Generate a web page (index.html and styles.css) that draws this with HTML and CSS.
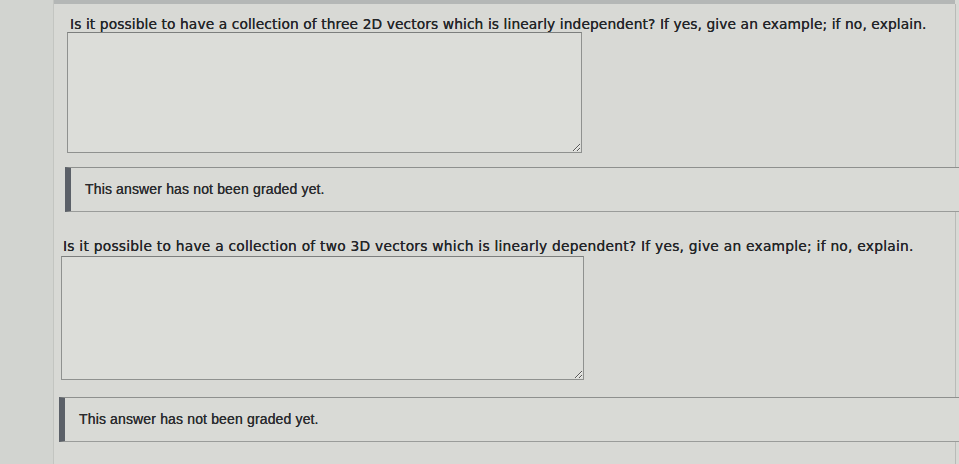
FILE: index.html
```html
<!DOCTYPE html>
<html>
<head>
<meta charset="utf-8">
<link rel="stylesheet" href="styles.css">
</head>
<body>
<div class="page">
  <div class="sidebar"></div>
  <div class="main">
    <div class="topband"></div>
    <div class="content">
      <section class="q q1">
        <p class="prompt">Is it possible to have a collection of three 2D vectors which is linearly independent? If yes, give an example; if no, explain.</p>
        <textarea class="answer a1"></textarea>
        <div class="graded g1">This answer has not been graded yet.</div>
      </section>
      <section class="q q2">
        <p class="prompt">Is it possible to have a collection of two 3D vectors which is linearly dependent? If yes, give an example; if no, explain.</p>
        <textarea class="answer a2"></textarea>
        <div class="graded g2">This answer has not been graded yet.</div>
      </section>
    </div>
  </div>
</div>
</body>
</html>
```
FILE: styles.css
```css
html, body {
  margin: 0;
  padding: 0;
  width: 959px;
  height: 464px;
  overflow: hidden;
  background: #d6d8d4;
}
.page {
  display: flex;
  height: 464px;
}
.sidebar {
  width: 53px;
  flex: none;
  background: #d2d4d0;
  border-right: 1px solid #c3c5c1;
}
.main {
  flex: 1;
  display: flex;
  flex-direction: column;
  background: #d8d9d5;
}
.topband {
  height: 4px;
  background: #b4b7b6;
  margin-right: 4px;
}
.content {
  flex: 1;
  border-right: 1px solid #b9bbb8;
  margin-right: 3px;
}
.q {
  display: flex;
  flex-direction: column;
  align-items: flex-start;
}
.prompt {
  margin: 0;
  font-family: "DejaVu Sans", Verdana, sans-serif;
  font-size: 13.8px;
  font-weight: normal;
  color: #232528;
  text-shadow: 0 0 0.6px #232528;
  line-height: 16px;
  white-space: nowrap;
}
.q1 .prompt { margin: 12px 0 0 16px; letter-spacing: 0.09px; }
.q2 .prompt { margin: 26px 0 0 9px; letter-spacing: 0.24px; }
.answer {
  display: block;
  box-sizing: border-box;
  background: #dcddd9;
  border: 1px solid #8f918f;
  border-top-color: #7c7e7d;
  resize: both;
  padding: 0;
}
.a1 { width: 515px; height: 121px; margin: 0 0 0 13px; }
.a2 { width: 523px; height: 124px; margin: 2px 0 0 7px; }
.graded {
  box-sizing: border-box;
  align-self: stretch;
  background: #d9dad6;
  border-top: 1px solid #8e908e;
  border-bottom: 1px solid #9a9c9a;
  border-left: 6px solid #5b6068;
  font-family: "Liberation Sans", Arial, sans-serif;
  font-size: 14px;
  letter-spacing: 0.15px;
  color: #2a2b2e;
  text-shadow: 0 0 0.3px #2a2b2e;
  padding-left: 14px;
  display: flex;
  align-items: center;
}
.g1 { height: 45px; margin: 14px -4px 0 11px; padding-bottom: 2px; }
.g2 { height: 45px; margin: 17px -4px 0 5px; padding-bottom: 1px; }
```
